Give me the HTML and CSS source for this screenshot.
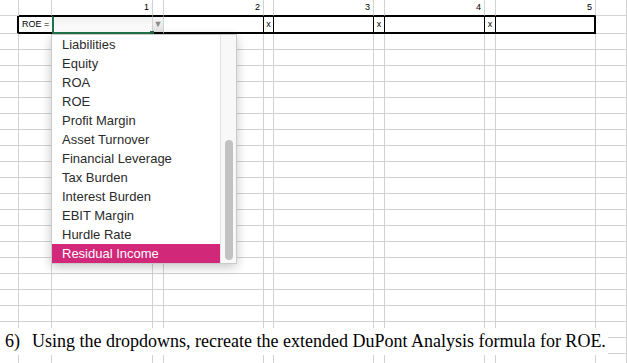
FILE: index.html
```html
<!DOCTYPE html>
<html>
<head>
    <title>DuPont Analysis - ROE</title>
    <link rel="stylesheet" href="styles.css">
</head>
<body>
    <div class="sheet" id="sheet">
        <!-- column numbers -->
        <div class="cell"></div>
        <div class="cell top"></div>
        <div class="cell top num">1</div>
        <div class="cell top"></div>
        <div class="cell top num">2</div>
        <div class="cell top"></div>
        <div class="cell top num">3</div>
        <div class="cell top"></div>
        <div class="cell top num">4</div>
        <div class="cell top"></div>
        <div class="cell top num">5</div>
        <div class="cell"></div>

        <!-- formula row -->
        <div class="cell f-start"></div>
        <div class="cell f label">ROE =</div>
        <div class="cell f selected"></div>
        <div class="cell f drop-btn">&#9660;</div>
        <div class="cell f dark"></div>
        <div class="cell f x dark">x</div>
        <div class="cell f dark"></div>
        <div class="cell f x dark">x</div>
        <div class="cell f dark"></div>
        <div class="cell f x dark">x</div>
        <div class="cell f f-end"></div>
        <div class="cell"></div>
    </div>

    <div class="dropdown">
        <ul class="options">
            <li>Liabilities</li>
            <li>Equity</li>
            <li>ROA</li>
            <li>ROE</li>
            <li>Profit Margin</li>
            <li>Asset Turnover</li>
            <li>Financial Leverage</li>
            <li>Tax Burden</li>
            <li>Interest Burden</li>
            <li>EBIT Margin</li>
            <li>Hurdle Rate</li>
            <li class="active">Residual Income</li>
        </ul>
        <div class="scroll">
            <div class="thumb"></div>
        </div>
    </div>

    <p class="question"><span class="qnum">6)</span>Using the dropdowns, recreate the extended DuPont Analysis formula for ROE.</p>

    <script>
        // fill the rest of the sheet with empty rows
        const sheet = document.getElementById('sheet');
        for (let r = 0; r < 21; r++) {
            for (let c = 0; c < 12; c++) {
                const cell = document.createElement('div');
                cell.className = 'cell';
                sheet.appendChild(cell);
            }
        }
    </script>
</body>
</html>
```

FILE: styles.css
```css
body {
    margin: 0;
    height: 363px;
    overflow: hidden;
    position: relative;
    background-color: #fff;
    font-family: "Liberation Sans", Arial, sans-serif;
}
.sheet {
    display: grid;
    grid-template-columns: 19px 33px 101px 11px 100px 10px 100px 11px 100px 11px 100px 1fr;
    grid-template-rows: 16px 18px;
    grid-auto-rows: 16px;
}
.cell {
    box-sizing: border-box;
    border-right: 1px solid #d2d2d2;
    border-bottom: 1px solid #d2d2d2;
    font-size: 9px;
    color: #000;
    white-space: nowrap;
    overflow: hidden;
}
.top {
    border-bottom-color: #000;
}
.num {
    text-align: right;
    padding-right: 3px;
    line-height: 15px;
}
.f {
    border-top: 1px solid #000;
    border-bottom: 2px solid #000;
    line-height: 15px;
}
.f-start {
    border-right: 2px solid #000;
}
.f-end {
    border-right: 2px solid #000;
}
.dark {
    border-right-color: #000;
}
.label {
    padding-left: 3px;
    border-right: none;
}
.x {
    text-align: center;
}
.selected {
    position: relative;
    overflow: visible;
    border-left: 2px solid #21744a;
    border-bottom-color: #21744a;
    background: linear-gradient(#f1f1f1, #fff);
}
.selected::after {
    content: "";
    position: absolute;
    right: -2px;
    bottom: -3px;
    width: 4px;
    height: 4px;
    background-color: #1f6b43;
}
.drop-btn {
    background: linear-gradient(#f6f6f6, #e4e4e4);
    color: #8a8a8a;
    font-size: 9px;
    text-align: center;
}
.dropdown {
    position: absolute;
    left: 51px;
    top: 34px;
    width: 186px;
    height: 230px;
    box-sizing: border-box;
    display: flex;
    background-color: #fff;
    border: 1px solid #cacaca;
    box-shadow: 0 3px 10px rgba(0,0,0,0.22);
}
.options {
    flex: 1;
    margin: 0;
    padding: 0;
    list-style: none;
}
.options li {
    height: 19px;
    line-height: 19px;
    padding-left: 10px;
    font-size: 13px;
    color: #2b2b2b;
}
.options li.active {
    background-color: #d1287a;
    color: #fff;
}
.scroll {
    width: 15px;
    padding-top: 105px;
    background-color: #f8f8f8;
    border-left: 1px solid #e2e2e2;
}
.thumb {
    width: 8px;
    height: 120px;
    margin: 0 auto;
    border-radius: 4px;
    background-color: #c2c2c2;
}
.question {
    position: absolute;
    left: 0;
    top: 328px;
    width: 603px;
    height: 27px;
    margin: 0;
    padding-left: 5px;
    background-color: #fff;
    font-family: "Liberation Serif", "Times New Roman", serif;
    font-size: 18px;
    line-height: 27px;
    color: #000;
    white-space: nowrap;
}
.qnum {
    display: inline-block;
    width: 27px;
}
```
